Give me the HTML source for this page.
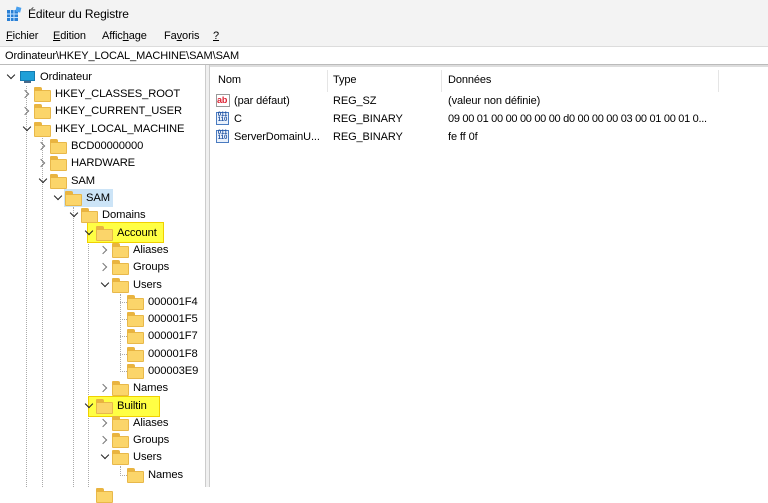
<!DOCTYPE html>
<html><head><meta charset="utf-8"><style>
*{margin:0;padding:0;box-sizing:border-box}
body{width:768px;height:487px;overflow:hidden;background:#fff;font-family:"Liberation Sans",sans-serif;font-size:11px;letter-spacing:-0.1px;color:#000;position:relative}
.a{position:absolute;white-space:nowrap}
.t{position:absolute;white-space:nowrap;line-height:16px;font-size:11.2px}
.f{position:absolute;width:17px;height:12px;background:#fbd56a;border-radius:1px;border:1px solid #e8b84a}
.f:before{content:"";position:absolute;left:-1px;top:-4px;width:8px;height:4px;background:#e9b440;border-radius:1px 2px 0 0}
.ar{position:absolute;width:6px;height:6px;border-right:1.3px solid #777;border-bottom:1.3px solid #777}
.r{transform:rotate(-45deg)}
.d{transform:rotate(45deg);border-color:#222}
.vl{position:absolute;width:0;border-left:1px dotted #aaa}
.hl{position:absolute;height:0;border-top:1px dotted #aaa}
</style></head><body>
<div class="a" style="left:0;top:0;width:768px;height:28px;background:#f3f3f3"></div>
<svg class="a" style="left:6px;top:6px" width="16" height="16"><rect x="1" y="4" width="11" height="11" fill="#2a7fd4"/><path d="M1 8h11M1 11.5h11M4.5 4v11M8 4v11" stroke="#bfe0ff" stroke-width="1"/><rect x="10" y="1" width="5" height="5" fill="#4aa0ee" transform="rotate(15 12 3)"/></svg>
<div class="a" style="left:28px;top:7px;font-size:12px">Éditeur du Registre</div>
<div class="a" style="left:0;top:28px;width:768px;height:18px;background:#f3f3f3"></div>
<div class="a" style="left:6px;top:30px"><u>F</u>ichier</div>
<div class="a" style="left:53px;top:30px"><u>E</u>dition</div>
<div class="a" style="left:102px;top:30px">Affic<u>h</u>age</div>
<div class="a" style="left:164px;top:30px">Fa<u>v</u>oris</div>
<div class="a" style="left:213px;top:30px"><u>?</u></div>
<div class="a" style="left:0;top:46px;width:768px;height:19px;border-top:1px solid #dcdcdc;border-bottom:1px solid #bbb;background:#fff"></div>
<div class="a" style="left:5px;top:50px">Ordinateur\HKEY_LOCAL_MACHINE\SAM\SAM</div>
<div class="a" style="left:205px;top:65px;width:5px;height:422px;background:#f0f0f0;border-left:1px solid #ccc;border-right:1px solid #ccc"></div>
<div class="a" style="left:210px;top:65px;width:558px;height:2px;background:#ddd"></div>
<div class="a" style="left:327px;top:70px;height:22px;border-left:1px solid #e5e5e5"></div>
<div class="a" style="left:441px;top:70px;height:22px;border-left:1px solid #e5e5e5"></div>
<div class="a" style="left:718px;top:70px;height:22px;border-left:1px solid #e5e5e5"></div>
<div class="a" style="left:218px;top:74px">Nom</div>
<div class="a" style="left:333px;top:74px">Type</div>
<div class="a" style="left:448px;top:74px">Données</div>
<div class="a" style="left:216px;top:94px;width:14px;height:13px;border:1px solid #999;background:#fff;color:#d23;font-size:9px;font-weight:bold;line-height:10px">ab</div>
<div class="a" style="left:234px;top:95px">(par défaut)</div><div class="a" style="left:333px;top:95px">REG_SZ</div><div class="a" style="left:448px;top:95px">(valeur non définie)</div>
<div class="a" style="left:216px;top:112px;width:13px;height:13px;border:1px solid #4a7bc0;background:#eaf1fb;color:#1e50a0;font-size:6px;line-height:5px;font-weight:bold;text-align:center">011<br>110</div>
<div class="a" style="left:234px;top:113px">C</div><div class="a" style="left:333px;top:113px">REG_BINARY</div><div class="a" style="left:448px;top:113px;letter-spacing:-0.3px">09 00 01 00 00 00 00 00 d0 00 00 00 03 00 01 00 01 0...</div>
<div class="a" style="left:216px;top:130px;width:13px;height:13px;border:1px solid #4a7bc0;background:#eaf1fb;color:#1e50a0;font-size:6px;line-height:5px;font-weight:bold;text-align:center">011<br>110</div>
<div class="a" style="left:234px;top:131px">ServerDomainU...</div><div class="a" style="left:333px;top:131px">REG_BINARY</div><div class="a" style="left:448px;top:131px">fe ff 0f</div>
<div class="vl" style="left:26px;top:86px;height:401px"></div>
<div class="vl" style="left:42px;top:138px;height:349px"></div>
<div class="vl" style="left:73px;top:207px;height:280px"></div>
<div class="vl" style="left:88px;top:224px;height:263px"></div>
<div class="vl" style="left:120px;top:294px;height:78px"></div>
<div class="vl" style="left:120px;top:466px;height:10px"></div>
<div class="hl" style="left:120px;top:302px;width:7px"></div>
<div class="hl" style="left:120px;top:319px;width:7px"></div>
<div class="hl" style="left:120px;top:336px;width:7px"></div>
<div class="hl" style="left:120px;top:354px;width:7px"></div>
<div class="hl" style="left:120px;top:371px;width:7px"></div>
<div class="hl" style="left:120px;top:475px;width:7px"></div>
<div class="a" style="left:64px;top:189px;width:49px;height:18px;background:#cce4f7"></div>
<div class="a" style="left:87px;top:222px;width:77px;height:21px;background:#ffff44;border:1px solid #f0d000"></div>
<div class="a" style="left:88px;top:396px;width:72px;height:21px;background:#ffff44;border:1px solid #f0d000"></div>
<div class="ar d" style="left:8px;top:72px"></div>
<div class="a" style="left:20px;top:71px;width:15px;height:10px;background:#1fa0d8;border:1px solid #157bb0"></div>
<div class="a" style="left:24px;top:81px;width:7px;height:2px;background:#4a6a8a"></div>
<div class="t" style="left:40px;top:69px">Ordinateur</div>
<div id="tree"></div>
<script>
var rows=[[1,'r','HKEY_CLASSES_ROOT',94],[1,'r','HKEY_CURRENT_USER',111],[1,'d','HKEY_LOCAL_MACHINE',129],[2,'r','BCD00000000',146],[2,'r','HARDWARE',163],[2,'d','SAM',181],[3,'d','SAM',198],[4,'d','Domains',215],[5,'d','Account',233],[6,'r','Aliases',250],[6,'r','Groups',267],[6,'d','Users',285],[7,'','000001F4',302],[7,'','000001F5',319],[7,'','000001F7',336],[7,'','000001F8',354],[7,'','000003E9',371],[6,'r','Names',388],[5,'d','Builtin',406],[6,'r','Aliases',423],[6,'r','Groups',440],[6,'d','Users',457],[7,'','Names',475],[5,'','',495]];
var h='';rows.forEach(function(r){var L=r[0],fx=Math.round(34+15.5*(L-1)),ax=fx-10,y=r[3];
if(r[1]=='r')h+='<div class="ar r" style="left:'+(ax-2)+'px;top:'+(y-3)+'px"></div>';
if(r[1]=='d')h+='<div class="ar d" style="left:'+(ax)+'px;top:'+(y-5)+'px"></div>';
h+='<div class="f" style="left:'+fx+'px;top:'+(y-4)+'px"></div>';
h+='<div class="t" style="left:'+(fx+21)+'px;top:'+(y-8)+'px">'+r[2]+'</div>';});
document.getElementById('tree').innerHTML=h;
</script>
</body></html>
